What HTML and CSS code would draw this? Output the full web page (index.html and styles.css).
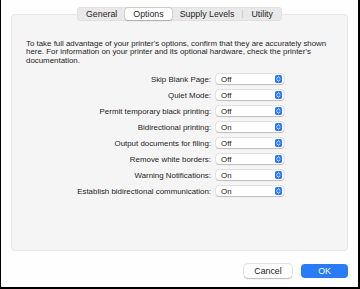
FILE: index.html
```html
<!DOCTYPE html>
<html>
<head>
<meta charset="utf-8">
<link rel="stylesheet" href="styles.css">
</head>
<body>
<div class="window">
  <div class="tabs-wrap">
    <div class="tabs">
      <span class="tab">General</span>
      <span class="tab selected">Options</span>
      <span class="tab">Supply Levels</span>
      <span class="sep"></span>
      <span class="tab">Utility</span>
    </div>
  </div>
  <div class="panel">
    <p class="intro">To take full advantage of your printer's options, confirm that they are accurately shown here. For information on your printer and its optional hardware, check the printer's documentation.</p>
    <div class="rows">
      <div class="row"><span class="label">Skip Blank Page:</span><span class="popup"><span>Off</span><svg class="stepper" viewBox="0 0 8 9"><rect width="8" height="9" rx="2" fill="#2a7cf6"/><path d="M2.3 3.6 L4 2 L5.7 3.6 M2.3 5.4 L4 7 L5.7 5.4" fill="none" stroke="#fff" stroke-width="1" stroke-linecap="round" stroke-linejoin="round"/></svg></span></div>
      <div class="row"><span class="label">Quiet Mode:</span><span class="popup"><span>Off</span><svg class="stepper" viewBox="0 0 8 9"><rect width="8" height="9" rx="2" fill="#2a7cf6"/><path d="M2.3 3.6 L4 2 L5.7 3.6 M2.3 5.4 L4 7 L5.7 5.4" fill="none" stroke="#fff" stroke-width="1" stroke-linecap="round" stroke-linejoin="round"/></svg></span></div>
      <div class="row"><span class="label">Permit temporary black printing:</span><span class="popup"><span>Off</span><svg class="stepper" viewBox="0 0 8 9"><rect width="8" height="9" rx="2" fill="#2a7cf6"/><path d="M2.3 3.6 L4 2 L5.7 3.6 M2.3 5.4 L4 7 L5.7 5.4" fill="none" stroke="#fff" stroke-width="1" stroke-linecap="round" stroke-linejoin="round"/></svg></span></div>
      <div class="row"><span class="label">Bidirectional printing:</span><span class="popup"><span>On</span><svg class="stepper" viewBox="0 0 8 9"><rect width="8" height="9" rx="2" fill="#2a7cf6"/><path d="M2.3 3.6 L4 2 L5.7 3.6 M2.3 5.4 L4 7 L5.7 5.4" fill="none" stroke="#fff" stroke-width="1" stroke-linecap="round" stroke-linejoin="round"/></svg></span></div>
      <div class="row"><span class="label">Output documents for filing:</span><span class="popup"><span>Off</span><svg class="stepper" viewBox="0 0 8 9"><rect width="8" height="9" rx="2" fill="#2a7cf6"/><path d="M2.3 3.6 L4 2 L5.7 3.6 M2.3 5.4 L4 7 L5.7 5.4" fill="none" stroke="#fff" stroke-width="1" stroke-linecap="round" stroke-linejoin="round"/></svg></span></div>
      <div class="row"><span class="label">Remove white borders:</span><span class="popup"><span>Off</span><svg class="stepper" viewBox="0 0 8 9"><rect width="8" height="9" rx="2" fill="#2a7cf6"/><path d="M2.3 3.6 L4 2 L5.7 3.6 M2.3 5.4 L4 7 L5.7 5.4" fill="none" stroke="#fff" stroke-width="1" stroke-linecap="round" stroke-linejoin="round"/></svg></span></div>
      <div class="row"><span class="label">Warning Notifications:</span><span class="popup"><span>On</span><svg class="stepper" viewBox="0 0 8 9"><rect width="8" height="9" rx="2" fill="#2a7cf6"/><path d="M2.3 3.6 L4 2 L5.7 3.6 M2.3 5.4 L4 7 L5.7 5.4" fill="none" stroke="#fff" stroke-width="1" stroke-linecap="round" stroke-linejoin="round"/></svg></span></div>
      <div class="row"><span class="label">Establish bidirectional communication:</span><span class="popup"><span>On</span><svg class="stepper" viewBox="0 0 8 9"><rect width="8" height="9" rx="2" fill="#2a7cf6"/><path d="M2.3 3.6 L4 2 L5.7 3.6 M2.3 5.4 L4 7 L5.7 5.4" fill="none" stroke="#fff" stroke-width="1" stroke-linecap="round" stroke-linejoin="round"/></svg></span></div>
    </div>
  </div>
  <div class="buttons">
    <span class="btn cancel">Cancel</span>
    <span class="btn ok">OK</span>
  </div>
</div>
</body>
</html>
```
FILE: styles.css
```css
html, body {
  margin: 0;
  padding: 0;
  background: #000;
}
body {
  width: 360px;
  height: 289px;
  overflow: hidden;
  font-family: "Liberation Sans", Arial, sans-serif;
  color: #222;
}
.window {
  box-sizing: border-box;
  width: 357px;
  height: 287px;
  margin-left: 1px;
  background: #fefefe;
  display: flex;
  flex-direction: column;
}
.tabs-wrap {
  display: flex;
  justify-content: center;
  margin-top: 7px;
  margin-bottom: -7px;
  position: relative;
  z-index: 1;
}
.tabs {
  display: flex;
  align-items: center;
  height: 14px;
  padding: 0 1px;
  background: #e9e9e9;
  border-radius: 4px;
  box-shadow: inset 0 0 0 0.5px rgba(0,0,0,0.08);
  font-size: 8.8px;
  color: #262626;
}
.tab {
  height: 12px;
  line-height: 12px;
  padding: 0 8px;
  border-radius: 3px;
}
.tab.selected {
  background: #fff;
  box-shadow: 0 0 0 0.5px rgba(0,0,0,0.12), 0 0.5px 1.5px rgba(0,0,0,0.2);
}
.sep {
  width: 1px;
  height: 8px;
  background: #cfcfcf;
}
.panel {
  margin: 0 10px;
  height: 237px;
  box-sizing: border-box;
  background: #f5f5f5;
  border: 1px solid #e6e6e6;
  border-radius: 4px;
  padding: 25px 0 0 14px;
}
.intro {
  margin: 0;
  font-size: 7.9px;
  line-height: 8.4px;
  width: 318px;
  color: #1e1e1e;
}
.rows {
  margin-top: 6px;
  display: flex;
  flex-direction: column;
}
.row {
  display: grid;
  grid-template-columns: 185px 68px;
  column-gap: 5px;
  align-items: center;
  height: 16px;
  font-size: 7.9px;
}
.label {
  text-align: right;
  color: #1e1e1e;
}
.popup {
  display: flex;
  align-items: center;
  justify-content: space-between;
  height: 10px;
  padding: 0 2px 0 5px;
  background: #fff;
  border-radius: 3px;
  box-shadow: 0 0 0 0.5px rgba(0,0,0,0.12), 0 0.5px 1px rgba(0,0,0,0.18);
}
.stepper {
  width: 7px;
  height: 8px;
  display: block;
}
.buttons {
  display: flex;
  justify-content: flex-end;
  gap: 9px;
  margin: 13px 10px 0 0;
}
.btn {
  height: 14px;
  line-height: 14px;
  text-align: center;
  font-size: 8.8px;
  border-radius: 4px;
}
.cancel {
  width: 48px;
  background: #fff;
  color: #222;
  box-shadow: 0 0 0 0.5px rgba(0,0,0,0.14), 0 0.5px 1.5px rgba(0,0,0,0.22);
}
.ok {
  width: 47px;
  background: #2a7cf6;
  color: #fff;
}
```
